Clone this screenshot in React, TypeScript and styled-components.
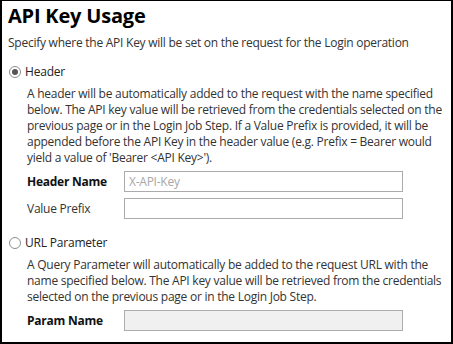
import React from "react";
import styled, { createGlobalStyle } from "styled-components";

const Global = createGlobalStyle`
  html, body { margin: 0; padding: 0; background: #fff; }
  * { box-sizing: border-box; }
`;

const Frame = styled.div`
  width: 453px;
  height: 344px;
  border: 2px solid #000;
  border-top-width: 1px;
  padding: 2px 0 0 6px;
  font-family: "Open Sans", "Noto Sans", sans-serif;
  color: #333;
  display: flex;
  flex-direction: column;
  overflow: hidden;
`;

const Title = styled.h1`
  margin: 0;
  font-size: 20px;
  line-height: 26px;
  font-weight: 700;
  color: #000;
  letter-spacing: -0.2px;
`;

const Subtitle = styled.p`
  margin: 6px 0 0 0;
  font-size: 12px;
  line-height: 16px;
  letter-spacing: -0.25px;
`;

const OptionRow = styled.label<{ $top: number }>`
  display: flex;
  align-items: center;
  gap: 4px;
  margin-top: ${(p) => p.$top}px;
  margin-left: 1px;
  font-size: 12px;
  line-height: 16px;
  color: #222;
  letter-spacing: -0.2px;
`;

const Radio = styled.span<{ $checked?: boolean }>`
  width: 12px;
  height: 12px;
  border-radius: 50%;
  border: 1px solid #8c8c8c;
  background: #fff;
  display: flex;
  align-items: center;
  justify-content: center;
  &::after {
    content: "";
    display: ${(p) => (p.$checked ? "block" : "none")};
    width: 6px;
    height: 6px;
    border-radius: 50%;
    background: #555;
  }
`;

const Description = styled.p`
  margin: 6px 0 0 19px;
  font-size: 12px;
  line-height: 16px;
  letter-spacing: -0.25px;
`;

const Fields = styled.div<{ $top: number }>`
  display: grid;
  grid-template-columns: 97px 279px;
  row-gap: 6px;
  align-items: center;
  margin: ${(p) => p.$top}px 0 0 19px;
`;

const FieldLabel = styled.span<{ $bold?: boolean }>`
  font-size: 12px;
  font-weight: ${(p) => (p.$bold ? 700 : 400)};
  color: ${(p) => (p.$bold ? "#111" : "#333")};
  letter-spacing: -0.25px;
`;

const Input = styled.input`
  height: 21px;
  width: 279px;
  border: 1px solid #ababab;
  padding: 0 4px;
  font-family: inherit;
  font-size: 12px;
  letter-spacing: -0.25px;
  color: #333;
  background: #fff;
  outline: none;
  &::placeholder { color: #a8a8a8; }
  &:disabled { background: #f0f0f0; border-color: #adadad; }
`;

export default function App() {
  return (
    <>
      <Global />
      <Frame>
        <Title>API Key Usage</Title>
        <Subtitle>Specify where the API Key will be set on the request for the Login operation</Subtitle>

        <OptionRow $top={13}>
          <Radio $checked />
          Header
        </OptionRow>
        <Description>
          A header will be automatically added to the request with the name specified
          <br />
          below. The API key value will be retrieved from the credentials selected on the
          <br />
          previous page or in the Login Job Step. If a Value Prefix is provided, it will be
          <br />
          appended before the API Key in the header value (e.g. Prefix = Bearer would
          <br />
          yield a value of 'Bearer &lt;API Key&gt;').
        </Description>
        <Fields $top={5}>
          <FieldLabel $bold>Header Name</FieldLabel>
          <Input placeholder="X-API-Key" />
          <FieldLabel>Value Prefix</FieldLabel>
          <Input />
        </Fields>

        <OptionRow $top={16}>
          <Radio />
          URL Parameter
        </OptionRow>
        <Description>
          A Query Parameter will automatically be added to the request URL with the
          <br />
          name specified below. The API key value will be retrieved from the credentials
          <br />
          selected on the previous page or in the Login Job Step.
        </Description>
        <Fields $top={5}>
          <FieldLabel $bold>Param Name</FieldLabel>
          <Input disabled />
        </Fields>
      </Frame>
    </>
  );
}
